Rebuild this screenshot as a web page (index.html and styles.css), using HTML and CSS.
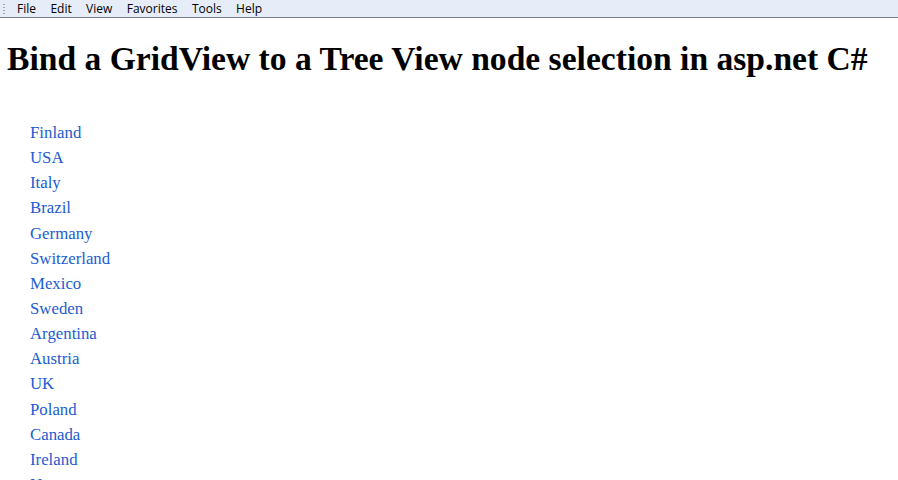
FILE: index.html
```html
<!DOCTYPE html>
<html>
<head>
<meta charset="utf-8">
<link rel="stylesheet" href="styles.css">
</head>
<body>
<div class="menubar">
  <span class="grip"></span>
  <span class="mi">File</span>
  <span class="mi">Edit</span>
  <span class="mi">View</span>
  <span class="mi">Favorites</span>
  <span class="mi">Tools</span>
  <span class="mi">Help</span>
</div>
<div class="page">
  <h1 class="title">Bind a GridView to a Tree View node selection in asp.net C#</h1>
  <ul class="tree">
    <li><a href="#">Finland</a></li>
    <li><a href="#">USA</a></li>
    <li><a href="#">Italy</a></li>
    <li><a href="#">Brazil</a></li>
    <li><a href="#">Germany</a></li>
    <li><a href="#">Switzerland</a></li>
    <li><a href="#">Mexico</a></li>
    <li><a href="#">Sweden</a></li>
    <li><a href="#">Argentina</a></li>
    <li><a href="#">Austria</a></li>
    <li><a href="#">UK</a></li>
    <li><a href="#">Poland</a></li>
    <li><a href="#">Canada</a></li>
    <li><a href="#">Ireland</a></li>
    <li><a href="#">Norway</a></li>
  </ul>
</div>
</body>
</html>
```
FILE: styles.css
```css
html, body {
  margin: 0;
  padding: 0;
  background: #fff;
  overflow: hidden;
}
body {
  font-family: "Liberation Serif", "Times New Roman", serif;
}
.menubar {
  height: 17px;
  background: #e6edf8;
  border-bottom: 1px solid #7a7f87;
  display: flex;
  align-items: center;
  font-family: "Open Sans", "Noto Sans", sans-serif;
  font-size: 12px;
  color: #000;
}
.grip {
  width: 2px;
  height: 12px;
  margin-left: 3px;
  margin-right: 12px;
  background-image: radial-gradient(circle, #a0a6b0 0.8px, transparent 1px);
  background-size: 2px 3px;
}
.mi {
  margin-right: 14.4px;
  line-height: 15px;
}
.page {
  padding: 0 7px;
}
.title {
  font-size: 33.6px;
  font-weight: bold;
  margin: 21px 0 0 0;
  line-height: 39px;
}
.tree {
  list-style: none;
  margin: 42px 0 0 0;
  padding: 0 0 0 23px;
}
.tree li {
  height: 25.15px;
  line-height: 25px;
  font-size: 16.8px;
}
.tree a {
  color: #1c5cd0;
  text-decoration: none;
}
```
